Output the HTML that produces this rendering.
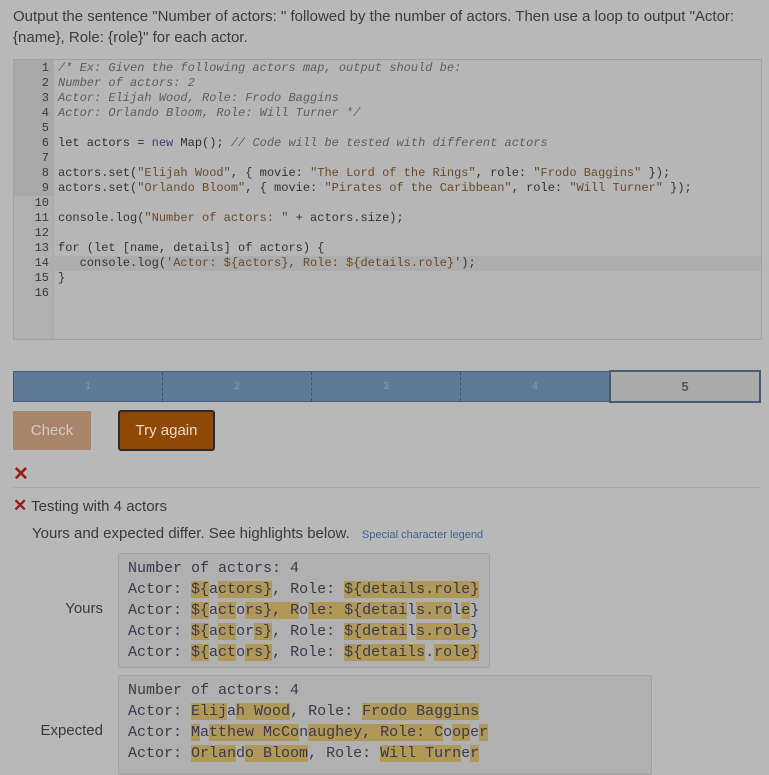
<!DOCTYPE html>
<html><head><meta charset="utf-8"><style>
*{margin:0;padding:0;box-sizing:border-box}
body{width:769px;height:764px;overflow:hidden;background:#b8b8b8;font-family:"Liberation Sans",sans-serif;color:#3a3a3a;position:relative}
.a{position:absolute}
.q{left:13px;top:6px;font-size:15px;line-height:21px;width:750px;color:#3c3c3c}
.ed{left:13px;top:59px;width:749px;height:281px;border:1px solid #a2a2a2;background:#b6b6b6}
.gut{position:absolute;left:0;top:0;width:40px;height:100%;background:#b0b0b0;border-right:1px solid #a8a8a8}
.gut1{position:absolute;left:0;top:0;width:40px;height:136px;background:#a8a8a8}
.code{position:absolute;left:0;top:1px;font-family:"Liberation Mono",monospace;font-size:12px;line-height:15px;width:747px;color:#333}
.code div{height:15px;white-space:pre}
.code .n{display:inline-block;width:35px;text-align:right;color:#3a3a3a;margin-right:9px}
.cm{color:#5e5e5e;font-style:italic}.kw{color:#4a3a7a}.st{color:#6a4a2a}
.hl{background:#adadad}
.pb{left:13px;top:371px;width:597px;height:31px;background:#5f7a97;border:1px solid #475a75;display:flex}
.pb div{flex:1;border-right:1px dashed #3e526a;color:#8598b0;font-size:10px;text-align:center;line-height:29px}
.pb div:last-child{border-right:none}
.p5{left:609px;top:370px;width:152px;height:33px;background:#ababab;border:2px solid #475a75;text-align:center;font-weight:bold;font-size:13px;line-height:29px;color:#555}
.b1{left:13px;top:411px;width:78px;height:39px;background:#a8846b;color:#d6cbc2;font-size:15px;text-align:center;line-height:39px}
.b2{left:118px;top:410px;width:97px;height:41px;background:#8f4806;border:2px solid #2a2a2a;border-radius:3px;color:#ead9c8;font-size:15px;text-align:center;line-height:37px}
.x{color:#9a1a1a;font-size:19px;font-weight:bold}
.box{background:#b0b0b0;border:1px solid #a2a2a2;border-radius:2px;font-family:"Liberation Mono",monospace;font-size:15px;line-height:21px;white-space:pre;padding:4px 0 0 9px;color:#3a3a4a}
.h{background:#b09858}
.lbl{font-size:15px;text-align:right;width:90px;left:13px}
</style></head><body>
<div class="a q">Output the sentence "Number of actors: " followed by the number of actors. Then use a loop to output "Actor: {name}, Role: {role}" for each actor.</div>
<div class="a ed"><div class="gut"></div><div class="gut1"></div>
<div class="code"><div><span class="n">1</span><span class="cm">/* Ex: Given the following actors map, output should be:</span></div><div><span class="n">2</span><span class="cm">Number of actors: 2</span></div><div><span class="n">3</span><span class="cm">Actor: Elijah Wood, Role: Frodo Baggins</span></div><div><span class="n">4</span><span class="cm">Actor: Orlando Bloom, Role: Will Turner */</span></div><div><span class="n">5</span></div><div><span class="n">6</span>let actors = <span class="kw">new</span> Map(); <span class="cm">// Code will be tested with different actors</span></div><div><span class="n">7</span></div><div><span class="n">8</span>actors.set(<span class="st">"Elijah Wood"</span>, { movie: <span class="st">"The Lord of the Rings"</span>, role: <span class="st">"Frodo Baggins"</span> });</div><div><span class="n">9</span>actors.set(<span class="st">"Orlando Bloom"</span>, { movie: <span class="st">"Pirates of the Caribbean"</span>, role: <span class="st">"Will Turner"</span> });</div><div><span class="n">10</span></div><div><span class="n">11</span>console.log(<span class="st">"Number of actors: "</span> + actors.size);</div><div><span class="n">12</span></div><div><span class="n">13</span>for (let [name, details] of actors) {</div><div class="hl"><span class="n" style="background:#b0b0b0">14</span>   console.log(<span class="st">'Actor: ${actors}, Role: ${details.role}'</span>);</div><div><span class="n">15</span>}</div><div><span class="n">16</span></div></div></div>
<div class="a pb"><div>1</div><div>2</div><div>3</div><div>4</div></div>
<div class="a p5">5</div>
<div class="a b1">Check</div>
<div class="a b2">Try again</div>
<div class="a x" style="left:13px;top:463px">✕</div>
<div class="a" style="left:13px;top:487px;width:748px;height:1px;background:#aaa"></div>
<div class="a" style="left:13px;top:496px;font-size:15px"><span class="x" style="font-size:17px">✕</span> Testing with 4 actors</div>
<div class="a" style="left:32px;top:525px;font-size:15px">Yours and expected differ. See highlights below.</div>
<div class="a" style="left:362px;top:529px;font-size:11px;color:#3a6494">Special character legend</div>
<div class="a lbl" style="top:600px">Yours</div>
<div class="a box" style="left:118px;top:553px;width:372px;height:115px">Number of actors: 4
Actor: <span class="h">${</span>a<span class="h">ctors}</span>, Role: <span class="h">${details.role}</span>
Actor: <span class="h">${</span>a<span class="h">ct</span>o<span class="h">rs}, R</span>o<span class="h">le: ${detai</span>l<span class="h">s.ro</span>l<span class="h">e</span>}
Actor: <span class="h">${</span>a<span class="h">ct</span>or<span class="h">s}</span>, Role: <span class="h">${detai</span>l<span class="h">s.role</span>}
Actor: <span class="h">${</span>a<span class="h">ct</span>o<span class="h">rs}</span>, Role: <span class="h">${details</span>.<span class="h">role}</span></div>
<div class="a lbl" style="top:722px">Expected</div>
<div class="a box" style="left:118px;top:675px;width:534px;height:100px">Number of actors: 4
Actor: <span class="h">Elij</span>a<span class="h">h Wood</span>, Role: <span class="h">Frodo Baggins</span>
Actor: <span class="h">M</span>a<span class="h">tthew McCo</span>n<span class="h">aughey, Role: C</span>o<span class="h">op</span>e<span class="h">r</span>
Actor: <span class="h">Orlan</span>d<span class="h">o Bloom</span>, Role: <span class="h">Will Turn</span>e<span class="h">r</span></div>
</body></html>
